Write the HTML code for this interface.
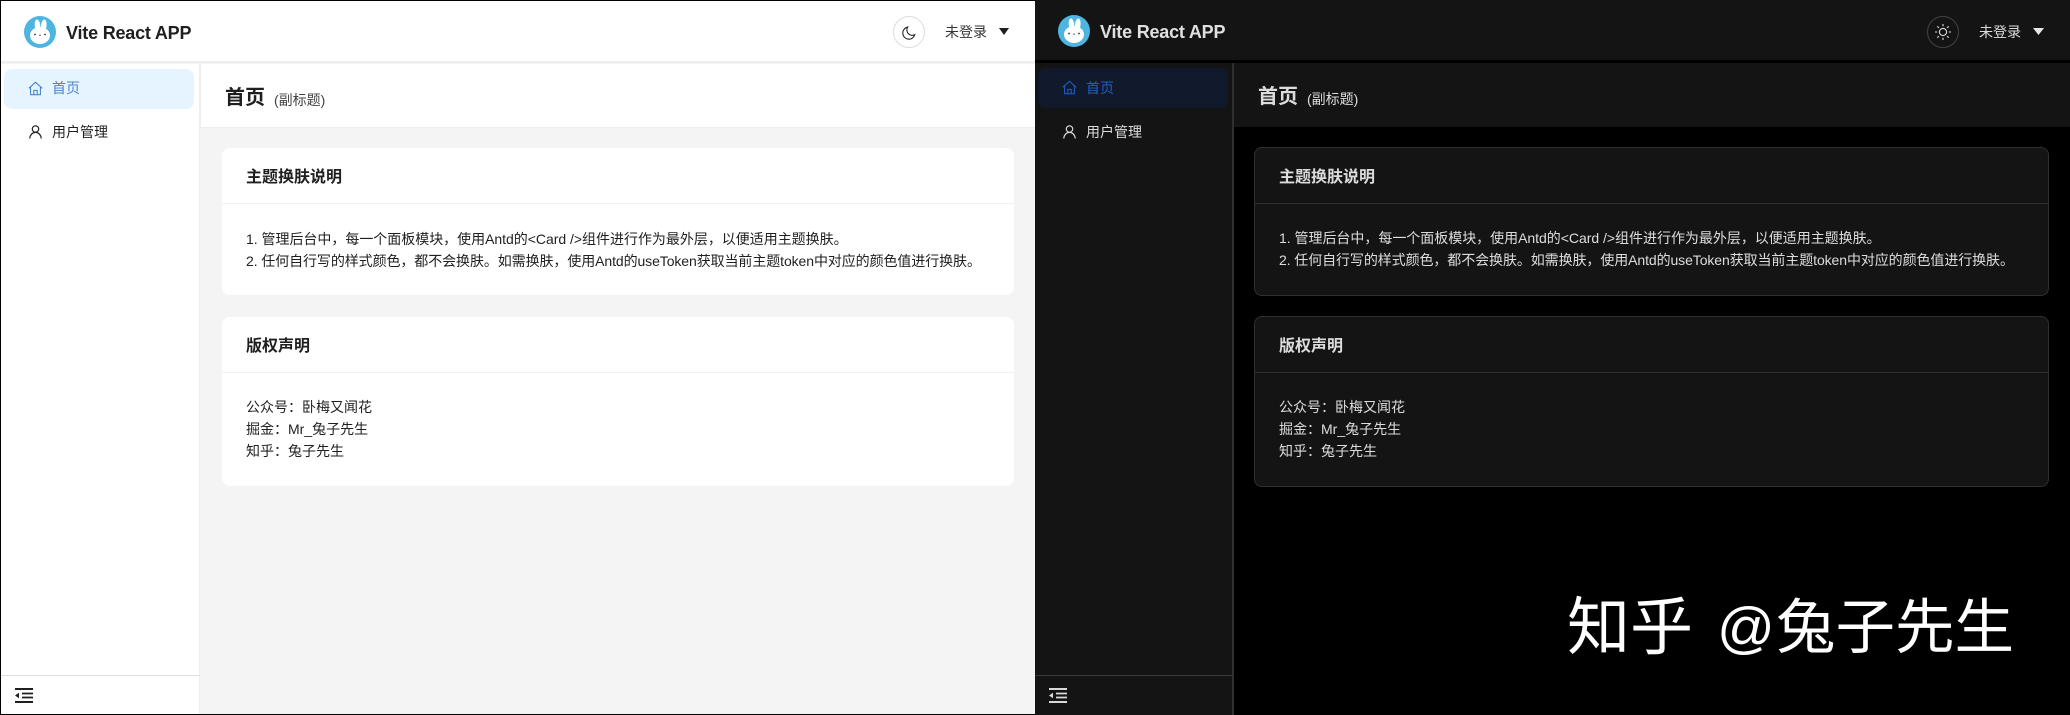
<!DOCTYPE html>
<html lang="zh"><head><meta charset="utf-8"><title>Vite React APP</title>
<style>
*{box-sizing:border-box}
html,body{margin:0;padding:0;width:2070px;height:715px;overflow:hidden;background:#000;font-family:"Liberation Sans","Noto Sans CJK SC",sans-serif;font-size:14px}
.a{position:absolute;white-space:nowrap}
.p{position:absolute;top:0;height:715px;overflow:hidden}
#L{left:0;width:1035px;background:#f4f4f4;color:rgba(0,0,0,.88);border:1px solid #000;border-right:0}
#D{left:1035px;width:1035px;background:#000;color:rgba(255,255,255,.85)}
.hd{left:0;top:0;right:0;height:62px}
#L .hd{background:#fff;top:0;height:62px;border-bottom:2px solid #eee}
#D .hd{background:#141414;height:62px;border-bottom:2px solid #000}
.sd{left:0;top:63px;width:199px;height:652px}
#L .sd{background:#fff;border-right:1px solid #eee}
#D .sd{background:#141414;border-right:2px solid #303030}
.ft{left:0;bottom:0;height:39px;width:199px}
#L .ft{border-top:1px solid #ddd;background:#fff;border-right:1px solid #eee}
#D .ft{height:40px;border-top:1px solid #3a3a3a;background:#141414;border-right:2px solid #303030}
.ph{left:199px;top:63px;right:0;height:64px}
#L .ph{background:#fff;border-bottom:1px solid #eee;border-left:1px solid #eee}
#D .ph{background:#141414}
.card{border-radius:8px}
#L .card{background:#fff}
#D .card{background:#141414;border:1px solid #303030}
.ln{height:1px;left:0;right:0}
#L .ln{background:#f0f0f0}
#D .ln{background:#303030}
.sel{border-radius:8px;height:40px;width:190px;left:3px;top:68px}
#L .sel{background:#e6f4ff}
#D .sel{background:#111a2c}
.b{font-weight:700}
.t{font-size:16px;font-weight:700}
.tx{font-size:14px;line-height:22px}
.l1{letter-spacing:-.025px}
.l2{letter-spacing:-.09px}
.logo{width:32px;height:32px}
.r{border-radius:50%;width:32px;height:32px}
#L .r{border:1px solid #ddd;background:#fff}
#D .r{border:1px solid #424242;background:#141414}
svg{display:block;overflow:visible}
#L .ic{color:#1f1f1f}
#D .ic{color:#d9d9d9}
.w{color:#fff;line-height:80px;top:588px}
</style></head><body>

<div id="L" class="p">
<div class="a hd"></div>
<svg class="a logo" style="left:23px;top:15px" viewBox="0 0 32 32"><circle cx="16" cy="16" r="16" fill="#4db5e0"/><ellipse cx="13.5" cy="9.5" rx="2.8" ry="6" fill="#fff" transform="rotate(-6 13.5 9.5)"/><ellipse cx="19.8" cy="9.5" rx="2.8" ry="6" fill="#fff" transform="rotate(6 19.8 9.5)"/><ellipse cx="16" cy="19.5" rx="10" ry="8.5" fill="#fff"/><circle cx="11" cy="18.5" r=".9" fill="#333"/><circle cx="16" cy="19.2" r=".7" fill="#333"/><circle cx="21" cy="18.5" r=".9" fill="#333"/></svg>
<div class="a b" style="left:65px;top:21px;font-size:18px;line-height:22px;color:#1f1f1f;letter-spacing:-.2px">Vite React APP</div>
<div class="a r" style="left:892px;top:15px"></div>
<svg class="a ic" style="left:901px;top:25px" width="14" height="14" viewBox="0 0 16 16" fill="none" stroke="currentColor" stroke-width="1.2"><path d="M6.5 1.2A7 7 0 1 0 14.6 10 A6.2 6.2 0 0 1 6.5 1.2Z"/></svg>
<div class="a" style="left:944px;top:21px;line-height:20px;color:rgba(0,0,0,.8)">未登录</div>
<svg class="a" style="left:998px;top:27px" width="10" height="7" viewBox="0 0 11 7" preserveAspectRatio="none"><path d="M0 0H11L5.5 7Z" fill="#1f1f1f"/></svg>
<div class="a sd"></div>
<div class="a sel"></div>
<svg class="a" style="left:27px;top:80px;color:#3a7fc8" width="15" height="15" viewBox="0 0 15 15" fill="none" stroke="currentColor" stroke-width="1"><path d="M.8 7.4 7.5 1.2l6.7 6.2M2.6 6v7.8h9.8V6M5.8 13.8V9.4h3.4v4.4"/></svg>
<div class="a" style="left:51px;top:77px;line-height:20px;color:#4a85c9">首页</div>
<svg class="a ic" style="left:28px;top:124px" width="13" height="14" viewBox="0 0 13 14" fill="none" stroke="currentColor" stroke-width="1.2"><circle cx="6.5" cy="4" r="3.2"/><path d="M.8 13.5C1 9.8 3.5 7.4 6.5 7.4s5.5 2.4 5.7 6.1"/></svg>
<div class="a" style="left:51px;top:121px;line-height:20px">用户管理</div>
<div class="a ft"></div>
<svg class="a ic" style="left:14px;top:687px" width="18" height="15" viewBox="0 0 18 15" fill="currentColor"><path d="M0 0h18v2H0zM0 13h18v2H0zM7 4.6h11v1.8H7zM7 8.6h11v1.8H7zM0 7.5 4 4.8v5.4z"/></svg>
<div class="a ph"></div>
<div class="a b" style="left:224px;top:84px;font-size:20px;line-height:26px">首页</div>
<div class="a" style="left:273px;top:89px;font-size:14px;line-height:20px;color:rgba(0,0,0,.75)">(副标题)</div>
<div class="a card" style="left:221px;top:147px;width:792px;height:147px">
<div class="a t" style="left:24px;top:18px;line-height:24px">主题换肤说明</div>
<div class="a ln" style="top:55px"></div>
<div class="a tx" style="left:24px;top:80px"><span class="l1">1. 管理后台中，每一个面板模块，使用Antd的&lt;Card /&gt;组件进行作为最外层，以便适用主题换肤。</span><br><span class="l2">2. 任何自行写的样式颜色，都不会换肤。如需换肤，使用Antd的useToken获取当前主题token中对应的颜色值进行换肤。</span></div>
</div>
<div class="a card" style="left:221px;top:316px;width:792px;height:169px">
<div class="a t" style="left:24px;top:18px;line-height:24px">版权声明</div>
<div class="a ln" style="top:55px"></div>
<div class="a tx" style="left:24px;top:79px">公众号：卧梅又闻花<br>掘金：Mr_兔子先生<br>知乎：兔子先生</div>
</div>
</div>

<div id="D" class="p">
<div class="a hd"></div>
<svg class="a logo" style="left:23px;top:15px" viewBox="0 0 32 32"><circle cx="16" cy="16" r="16" fill="#4db5e0"/><ellipse cx="13.5" cy="9.5" rx="2.8" ry="6" fill="#fff" transform="rotate(-6 13.5 9.5)"/><ellipse cx="19.8" cy="9.5" rx="2.8" ry="6" fill="#fff" transform="rotate(6 19.8 9.5)"/><ellipse cx="16" cy="19.5" rx="10" ry="8.5" fill="#fff"/><circle cx="11" cy="18.5" r=".9" fill="#333"/><circle cx="16" cy="19.2" r=".7" fill="#333"/><circle cx="21" cy="18.5" r=".9" fill="#333"/></svg>
<div class="a b" style="left:65px;top:21px;font-size:18px;line-height:22px;color:#e0e0e0;letter-spacing:-.2px">Vite React APP</div>
<div class="a r" style="left:892px;top:16px"></div>
<svg class="a ic" style="left:900px;top:24px" width="16" height="16" viewBox="0 0 16 16" fill="none" stroke="currentColor" stroke-width="1.1"><circle cx="8" cy="8" r="3.6"/><path d="M8 0v2.2M8 13.8V16M0 8h2.2M13.8 8H16M2.3 2.3 3.9 3.9M12.1 12.1l1.6 1.6M2.3 13.7l1.6-1.6M12.1 3.9l1.6-1.6"/></svg>
<div class="a" style="left:944px;top:22px;line-height:20px">未登录</div>
<svg class="a" style="left:998px;top:28px" width="11" height="7" viewBox="0 0 11 7"><path d="M0 0H11L5.5 7Z" fill="#e6e6e6"/></svg>
<div class="a sd"></div>
<div class="a sel"></div>
<svg class="a" style="left:27px;top:80px;color:#1f5fc4" width="15" height="15" viewBox="0 0 15 15" fill="none" stroke="currentColor" stroke-width="1"><path d="M.8 7.4 7.5 1.2l6.7 6.2M2.6 6v7.8h9.8V6M5.8 13.8V9.4h3.4v4.4"/></svg>
<div class="a" style="left:51px;top:78px;line-height:20px;color:#1f5fc4">首页</div>
<svg class="a ic" style="left:28px;top:125px" width="13" height="14" viewBox="0 0 13 14" fill="none" stroke="currentColor" stroke-width="1.2"><circle cx="6.5" cy="4" r="3.2"/><path d="M.8 13.5C1 9.8 3.5 7.4 6.5 7.4s5.5 2.4 5.7 6.1"/></svg>
<div class="a" style="left:51px;top:122px;line-height:20px">用户管理</div>
<div class="a ft"></div>
<svg class="a ic" style="left:14px;top:688px" width="18" height="15" viewBox="0 0 18 15" fill="currentColor"><path d="M0 0h18v2H0zM0 13h18v2H0zM7 4.6h11v1.8H7zM7 8.6h11v1.8H7zM0 7.5 4 4.8v5.4z"/></svg>
<div class="a ph"></div>
<div class="a b" style="left:223px;top:84px;font-size:20px;line-height:26px">首页</div>
<div class="a" style="left:272px;top:89px;font-size:14px;line-height:20px">(副标题)</div>
<div class="a card" style="left:219px;top:147px;width:795px;height:149px">
<div class="a t" style="left:24px;top:18px;line-height:24px">主题换肤说明</div>
<div class="a ln" style="top:55px"></div>
<div class="a tx" style="left:24px;top:79px"><span class="l1">1. 管理后台中，每一个面板模块，使用Antd的&lt;Card /&gt;组件进行作为最外层，以便适用主题换肤。</span><br><span class="l2">2. 任何自行写的样式颜色，都不会换肤。如需换肤，使用Antd的useToken获取当前主题token中对应的颜色值进行换肤。</span></div>
</div>
<div class="a card" style="left:219px;top:316px;width:795px;height:171px">
<div class="a t" style="left:24px;top:18px;line-height:24px">版权声明</div>
<div class="a ln" style="top:55px"></div>
<div class="a tx" style="left:24px;top:79px">公众号：卧梅又闻花<br>掘金：Mr_兔子先生<br>知乎：兔子先生</div>
</div>
<div class="a w" style="left:532px;font-size:63px">知乎</div>
<div class="a w" style="left:682px;font-size:57px">@</div>
<div class="a w" style="left:741px;font-size:59.5px">兔子先生</div>
</div>
</body></html>
